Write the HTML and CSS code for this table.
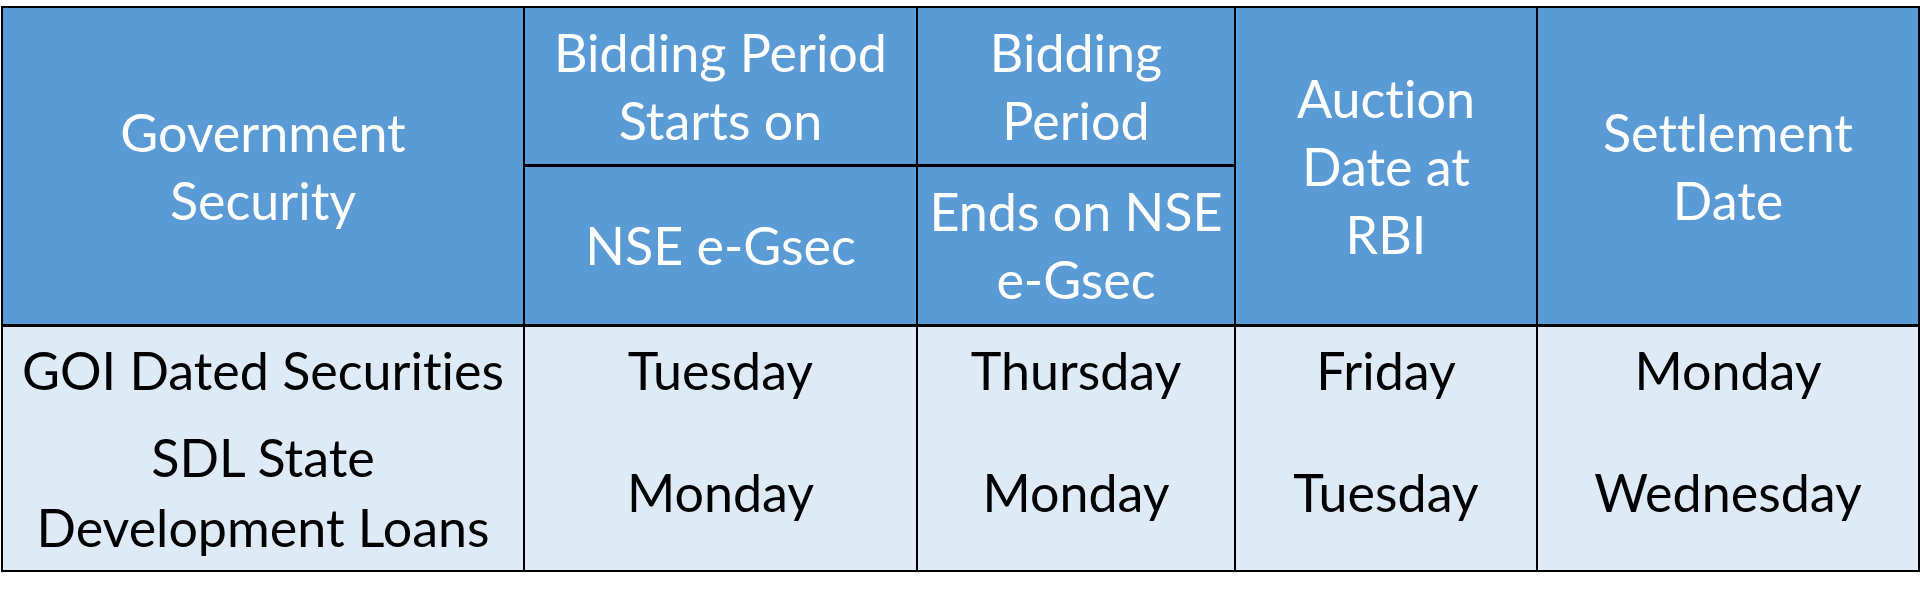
FILE: index.html
```html
<!DOCTYPE html>
<html lang="en">
<head>
<meta charset="utf-8">
<title>Government Security Auction Schedule</title>
<link rel="stylesheet" href="styles.css">
</head>
<body>
<table class="schedule">
  <colgroup>
    <col class="c1"><col class="c2"><col class="c3"><col class="c4"><col class="c5">
  </colgroup>
  <thead>
    <tr class="h1">
      <th rowspan="2">Government<br>Security</th>
      <th>Bidding Period<br>Starts on</th>
      <th>Bidding<br>Period</th>
      <th rowspan="2">Auction<br>Date at<br>RBI</th>
      <th rowspan="2">Settlement<br>Date</th>
    </tr>
    <tr class="h2">
      <th>NSE e-Gsec</th>
      <th>Ends on NSE<br>e-Gsec</th>
    </tr>
  </thead>
  <tbody>
    <tr class="r1">
      <td>GOI Dated Securities</td>
      <td>Tuesday</td>
      <td>Thursday</td>
      <td>Friday</td>
      <td>Monday</td>
    </tr>
    <tr class="r2">
      <td>SDL State<br>Development Loans</td>
      <td>Monday</td>
      <td>Monday</td>
      <td>Tuesday</td>
      <td>Wednesday</td>
    </tr>
  </tbody>
</table>
</body>
</html>
```
FILE: styles.css
```css
html, body {
  margin: 0;
  padding: 0;
  background: #ffffff;
}

body {
  padding: 6px 0 0 1px;
  font-family: "Lato", "Open Sans", sans-serif;
  font-variant-ligatures: none;
  font-feature-settings: "liga" 0, "dlig" 0;
}

.schedule {
  border-collapse: collapse;
  table-layout: fixed;
  width: 1917px;
  border: 2px solid #000;
}

.c1 { width: 522px; }
.c2 { width: 393px; }
.c3 { width: 318px; }
.c4 { width: 302px; }
.c5 { width: 382px; }

.schedule th,
.schedule td {
  border: 2px solid #000;
  padding: 0;
  text-align: center;
  vertical-align: middle;
  font-size: 52px;
  line-height: 68px;
  font-weight: 400;
}

.schedule th {
  background: #5b9bd5;
  color: #ffffff;
}

.schedule thead tr.h2 th {
  border-bottom: 3px solid #000;
}
.schedule thead tr.h1 th[rowspan] {
  border-bottom: 3px solid #000;
}

.schedule td {
  background: #deeaf6;
  color: #000000;
  line-height: 70px;
}

.schedule tbody td {
  border-top: none;
  border-bottom: none;
}
.schedule tbody tr.r2 td {
  border-bottom: 2px solid #000;
}
.schedule thead tr.h1 + tr th,
.schedule tbody tr.r1 td {
  border-top: 3px solid #000;
}
.schedule thead tr.h2 th {
  border-top: 2px solid #000;
}

.h1 { height: 158px; }
.h2 { height: 160px; }
.r1 { height: 89px; }
.r2 { height: 157px; }
```
